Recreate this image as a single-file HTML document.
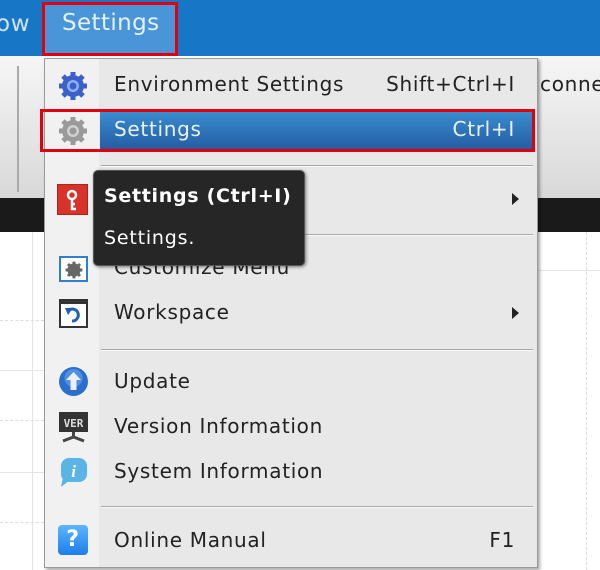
<!DOCTYPE html>
<html><head><style>
*{margin:0;padding:0;box-sizing:border-box}
body{width:600px;height:570px;overflow:hidden;position:relative;background:#fff;font-family:"DejaVu Sans","Liberation Sans",sans-serif;font-size:20px;letter-spacing:0.7px;color:#222}
.abs{position:absolute}
.top{left:0;top:0;width:600px;height:56px;background:#1876c6}
.tb{top:56px;height:142px;background:linear-gradient(#f6f6f6,#d8d8d8)}
.blk{top:198px;height:34px;background:#1a1a1a}
.menu{left:44px;top:58px;width:494px;height:510px;background:#e8e8e8;border:1px solid #9a9a9a;box-shadow:2px 2px 3px rgba(0,0,0,.35)}
.icol{left:0;top:0;width:54px;height:100%;background:#f1f1f1}
.it{left:69px;white-space:nowrap}
.sc{right:22px;white-space:nowrap}
.sep{left:56px;right:4px;height:2px;border-top:1px solid #a8a8a8;border-bottom:1px solid #fafafa}
.arr{right:18px;width:0;height:0;border-left:7px solid #222;border-top:6px solid transparent;border-bottom:6px solid transparent}
</style></head><body>
<div class="abs top"></div>
<div class="abs" style="left:-4px;top:11px;color:#cfe3f6;font-size:23px">ow</div>
<div class="abs" style="left:42px;top:2px;width:136px;height:54px;background:#4a95d8;border:3px solid #e00010"></div>
<div class="abs" style="left:62px;top:10px;color:#e4f0fb;font-size:23px;letter-spacing:0.4px">Settings</div>
<div class="abs tb" style="left:0;width:44px"></div>
<div class="abs" style="left:17px;top:66px;width:2px;height:126px;background:#aaa"></div>
<div class="abs tb" style="left:538px;width:62px"></div>
<div class="abs" style="left:540px;top:72px;color:#222">conne</div>
<div class="abs blk" style="left:0;width:44px"></div>
<div class="abs blk" style="left:538px;width:62px"></div>
<div class="abs" style="left:32px;top:232px;width:1px;height:338px;background:#e4e4e4"></div>
<div class="abs" style="left:0;top:320px;width:44px;border-top:1px dashed #ddd"></div>
<div class="abs" style="left:0;top:370px;width:44px;border-top:1px solid #e4e4e4"></div>
<div class="abs" style="left:0;top:420px;width:44px;border-top:1px dashed #ddd"></div>
<div class="abs" style="left:0;top:472px;width:44px;border-top:1px solid #e4e4e4"></div>
<div class="abs" style="left:0;top:522px;width:44px;border-top:1px dashed #ddd"></div>
<div class="abs" style="left:586px;top:232px;height:338px;border-left:1px dashed #ddd"></div>
<div class="abs" style="left:538px;top:270px;width:62px;border-top:1px solid #e4e4e4"></div>
<div class="abs menu">
 <div class="abs icol"></div>
 <svg class="abs" style="left:13px;top:12px" width="30" height="30" viewBox="0 0 30 30"><g fill="#3d5fc8"><circle cx="15" cy="15" r="11"/><g stroke="#3d5fc8" stroke-width="5"><line x1="15" y1="1" x2="15" y2="29"/><line x1="1" y1="15" x2="29" y2="15"/><line x1="5" y1="5" x2="25" y2="25"/><line x1="25" y1="5" x2="5" y2="25"/></g></g><circle cx="15" cy="15" r="6" fill="#8fb0f0"/><circle cx="15" cy="15" r="3.5" fill="#3d5fc8"/></svg>
 <div class="abs it" style="top:13px">Environment Settings</div>
 <div class="abs sc" style="top:13px">Shift+Ctrl+I</div>
 <div class="abs" style="left:55px;top:51px;width:435px;height:41px;background:linear-gradient(#3a8fd2,#245aa0)"></div>
 <svg class="abs" style="left:13px;top:57px" width="30" height="30" viewBox="0 0 30 30"><g fill="#9a9a9a"><circle cx="15" cy="15" r="11"/><g stroke="#9a9a9a" stroke-width="5"><line x1="15" y1="1" x2="15" y2="29"/><line x1="1" y1="15" x2="29" y2="15"/><line x1="5" y1="5" x2="25" y2="25"/><line x1="25" y1="5" x2="5" y2="25"/></g></g><circle cx="15" cy="15" r="6" fill="#d0d0d0"/><circle cx="15" cy="15" r="3.5" fill="#9a9a9a"/></svg>
 <div class="abs it" style="top:58px;color:#e8f1fa">Settings</div>
 <div class="abs sc" style="top:58px;color:#e8f1fa">Ctrl+I</div>
 <div class="abs" style="left:-5px;top:50px;width:495px;height:43px;border:3px solid #e00010"></div>
 <div class="abs sep" style="top:106px"></div>
 <div class="abs" style="left:12px;top:125px;width:31px;height:31px;background:#d8332a;border:1px solid #b52018"></div>
 <svg class="abs" style="left:19px;top:130px" width="16" height="22" viewBox="0 0 16 22"><circle cx="8" cy="6" r="4" fill="none" stroke="#fff" stroke-width="2.5"/><path d="M8 10V20H12M8 15H11" stroke="#fff" stroke-width="2.5" fill="none"/></svg>
 <div class="abs arr" style="top:134px"></div>
 <div class="abs sep" style="top:175px"></div>
 <div class="abs" style="left:14px;top:197px;width:29px;height:26px;background:#fff;border:2px solid #2f7fd0"></div>
 <svg class="abs" style="left:20px;top:202px" width="18" height="18" viewBox="0 0 30 30"><g fill="#666"><circle cx="15" cy="15" r="11"/><g stroke="#666" stroke-width="5"><line x1="15" y1="1" x2="15" y2="29"/><line x1="1" y1="15" x2="29" y2="15"/><line x1="5" y1="5" x2="25" y2="25"/><line x1="25" y1="5" x2="5" y2="25"/></g></g></svg>
 <div class="abs it" style="top:196px">Customize Menu</div>
 <div class="abs" style="left:14px;top:240px;width:29px;height:29px;background:#fff;border:2px solid #333;border-top-width:5px"></div>
 <svg class="abs" style="left:19px;top:247px" width="20" height="18" viewBox="0 0 20 18"><path d="M5 4 A6 6 0 1 1 8 15" stroke="#1f5fb0" stroke-width="3" fill="none"/><path d="M1 2 L9 2 L4 9Z" fill="#1f5fb0"/></svg>
 <div class="abs it" style="top:241px">Workspace</div>
 <div class="abs arr" style="top:248px"></div>
 <div class="abs sep" style="top:290px"></div>
 <svg class="abs" style="left:13px;top:307px" width="31" height="31" viewBox="0 0 31 31"><circle cx="15.5" cy="15.5" r="14.5" fill="#2a6fd0"/><circle cx="15.5" cy="12" r="9" fill="#6aa8ea" opacity=".6"/><path d="M15.5 6 L23 14 H18.5 V24 H12.5 V14 H8Z" fill="#eef"/></svg>
 <div class="abs it" style="top:310px">Update</div>
 <svg class="abs" style="left:13px;top:352px" width="31" height="32" viewBox="0 0 31 32"><rect x="1" y="1" width="29" height="20" fill="#333"/><text x="15.5" y="16" font-size="11" font-weight="bold" fill="#ddd" text-anchor="middle" font-family="DejaVu Sans Mono" letter-spacing="0">VER</text><path d="M15.5 21 V26 M5 30 L15.5 26 L26 30" stroke="#444" stroke-width="3" fill="none"/></svg>
 <div class="abs it" style="top:355px">Version Information</div>
 <svg class="abs" style="left:13px;top:398px" width="31" height="32" viewBox="0 0 31 32"><rect x="3" y="1" width="26" height="24" rx="8" fill="#5ab4e6"/><path d="M5 20 L3 30 L12 23Z" fill="#5ab4e6"/><text x="16" y="20" font-size="17" font-style="italic" font-weight="bold" fill="#fff" text-anchor="middle" font-family="Liberation Serif">i</text></svg>
 <div class="abs it" style="top:400px">System Information</div>
 <div class="abs sep" style="top:447px"></div>
 <div class="abs" style="left:13px;top:466px;width:30px;height:30px;background:linear-gradient(#5bb6ff,#1d7ee8);border-radius:4px;color:#fff;font-weight:bold;font-size:22px;text-align:center;line-height:30px">?</div>
 <div class="abs it" style="top:469px">Online Manual</div>
 <div class="abs sc" style="top:469px">F1</div>
</div>
<div class="abs" style="left:93px;top:170px;width:212px;height:96px;background:#262626;border:1px solid #555;border-radius:5px;box-shadow:1px 1px 3px rgba(0,0,0,.5)"></div>
<div class="abs" style="left:104px;top:185px;color:#fff;font-weight:bold;font-size:19px;letter-spacing:0.7px;white-space:nowrap">Settings (Ctrl+I)</div>
<div class="abs" style="left:104px;top:227px;color:#fff;font-size:19px;letter-spacing:0.8px">Settings.</div>
</body></html>
